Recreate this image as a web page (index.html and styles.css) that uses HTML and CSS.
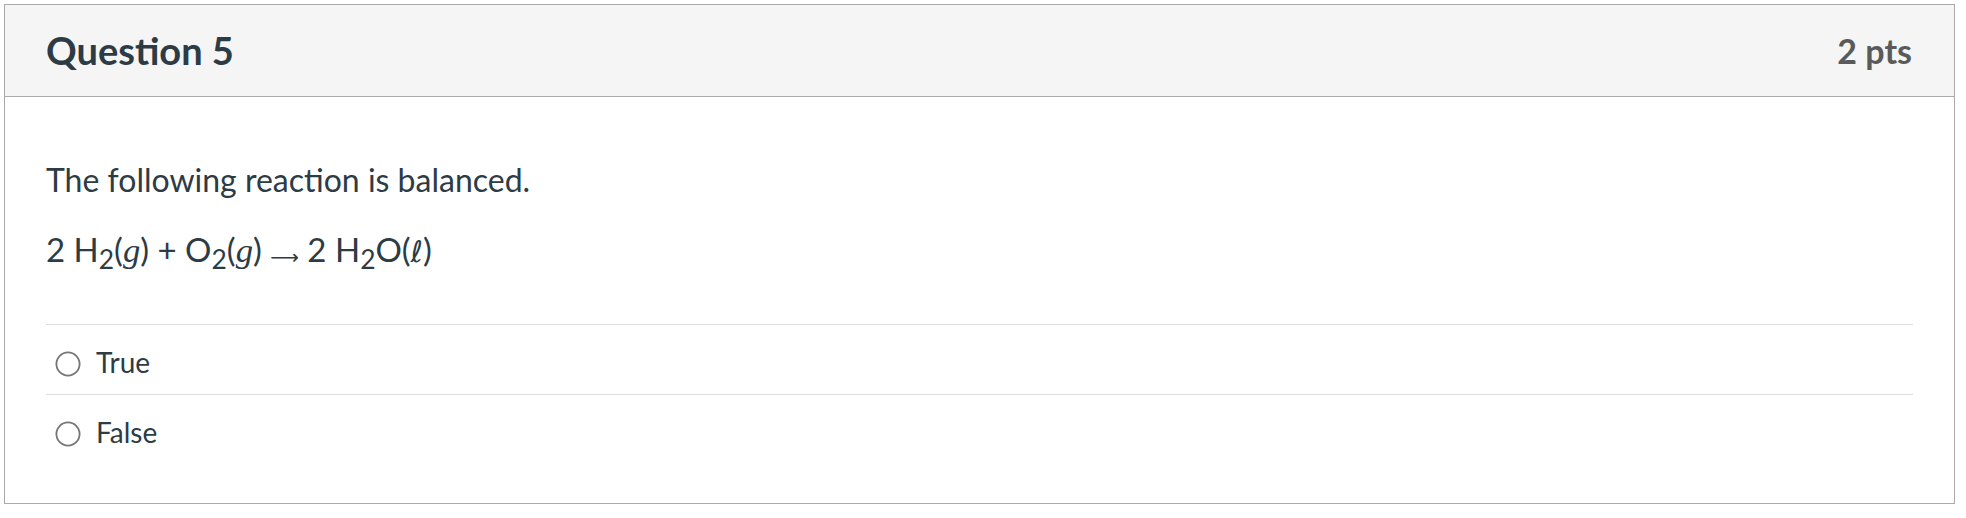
FILE: index.html
```html
<!DOCTYPE html>
<html lang="en">
<head>
<meta charset="utf-8">
<title>Question 5</title>
<link rel="stylesheet" href="styles.css">
</head>
<body>
  <div class="question">
    <div class="question-header">
      <h2 class="question-title">Question 5</h2>
      <span class="question-points">2 pts</span>
    </div>
    <div class="question-body">
      <p class="question-text">The following reaction is balanced.</p>
      <p class="equation">2 H<span class="sub">2</span>(<span class="state">g</span>) + O<span class="sub">2</span>(<span class="state">g</span>) <span class="arrow">⟶</span> 2 H<span class="sub">2</span>O(<span class="liquid">ℓ</span>)</p>
      <div class="answers">
        <label class="answer"><svg class="radio" width="26" height="26" viewBox="0 0 26 26"><circle cx="13" cy="13" r="11.6" fill="#ffffff" stroke="#767676" stroke-width="1.8"/></svg><span class="answer-label">True</span></label>
        <label class="answer"><svg class="radio" width="26" height="26" viewBox="0 0 26 26"><circle cx="13" cy="13" r="11.6" fill="#ffffff" stroke="#767676" stroke-width="1.8"/></svg><span class="answer-label">False</span></label>
      </div>
    </div>
  </div>
</body>
</html>
```

FILE: styles.css
```css
html, body {
  margin: 0;
  padding: 0;
  background: #ffffff;
}

body {
  padding: 4px 0 0 4px;
  font-family: Lato, "Liberation Sans", sans-serif;
  color: #2d3b45;
}

.question {
  box-sizing: border-box;
  width: 1951px;
  border: 1px solid #aaaaaa;
  background: #ffffff;
}

.question-header {
  box-sizing: border-box;
  height: 92px;
  display: flex;
  justify-content: space-between;
  align-items: flex-start;
  padding: 22px 42px 0 41px;
  background: #f5f5f5;
  border-bottom: 1px solid #aaaaaa;
}

.question-title {
  margin: 0;
  font-size: 38px;
  font-weight: 700;
  line-height: 46px;
  color: #2d3b45;
}

.question-points {
  font-size: 34px;
  font-weight: 700;
  line-height: 48px;
  color: #5a5a5a;
}

.question-body {
  padding: 58px 41px 39px 41px;
}

.question-text {
  margin: 0 0 19px 0;
  font-size: 32px;
  line-height: 50px;
}

.equation {
  margin: 0 0 50px 0;
  font-size: 33px;
  line-height: 50px;
  white-space: nowrap;
}

.sub {
  font-size: 0.8em;
  line-height: 0;
  vertical-align: -0.26em;
}

.state {
  font-family: "Liberation Serif", serif;
  font-style: italic;
  font-size: 1.05em;
  line-height: 0;
}

.liquid {
  font-family: "DejaVu Sans", sans-serif;
  font-size: 0.9em;
  line-height: 0;
}

.arrow {
  display: inline-block;
  font-family: "DejaVu Sans", sans-serif;
  font-size: 20px;
  line-height: 0;
  vertical-align: -0.1em;
  color: #2d3b45;
}

.answers {
  display: flex;
  flex-direction: column;
}

.answer {
  display: flex;
  align-items: center;
  padding: 21px 0 16px 0;
  border-top: 1px solid #dddddd;
  font-size: 28px;
  line-height: 32px;
  color: #2d3b45;
}

.radio {
  display: block;
  width: 26px;
  height: 26px;
  margin: 4px 15px 0 9px;
  flex: none;
}
```
